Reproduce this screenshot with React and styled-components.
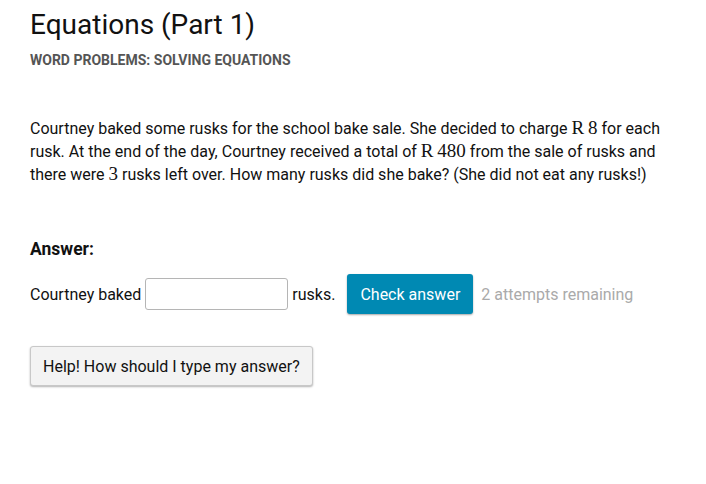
import React from "react";
import styled, { createGlobalStyle } from "styled-components";

const Global = createGlobalStyle`
  html, body { margin: 0; padding: 0; background: #fff; }
  body { font-family: Roboto, "Noto Sans", sans-serif; color: #111; }
`;

const Page = styled.div`
  padding: 8px 30px 40px 30px;
  width: 646px;
`;

const Title = styled.h1`
  font-size: 28px;
  font-weight: 400;
  margin: 0;
  line-height: 34px;
  color: #111;
`;

const Subtitle = styled.div`
  font-size: 14px;
  font-weight: 700;
  color: #555;
  text-transform: uppercase;
  margin-top: 9px;
  line-height: 18px;
`;

const Problem = styled.p`
  font-size: 16px;
  line-height: 23px;
  margin: 48px 0 0 0;
  max-width: 640px;
`;

const M = styled.span`
  font-family: "Liberation Serif", "DejaVu Serif", serif;
  font-size: 19px;
  line-height: 1;
`;

const AnswerLabel = styled.div`
  font-size: 17.5px;
  font-weight: 700;
  margin-top: 52px;
  line-height: 22px;
`;

const Row = styled.div`
  display: flex;
  align-items: center;
  margin-top: 14px;
  font-size: 16px;
`;

const Input = styled.input`
  width: 143px;
  height: 32px;
  box-sizing: border-box;
  border: 1px solid #b5b5b5;
  border-radius: 3px;
  margin: 0 4px;
  font-size: 16px;
  font-family: inherit;
`;

const CheckButton = styled.button`
  margin-left: 12px;
  height: 40px;
  padding: 0 13px;
  background: #0089b3;
  color: #fff;
  border: none;
  border-radius: 3px;
  font-family: inherit;
  font-size: 16px;
  box-shadow: 0 1px 2px rgba(0,0,0,0.35);
`;

const Attempts = styled.span`
  margin-left: 8px;
  color: #aaa;
`;

const HelpButton = styled.button`
  margin-top: 32px;
  height: 40px;
  padding: 0 12px;
  background: #f3f3f3;
  border: 1px solid #c8c8c8;
  border-radius: 3px;
  font-family: Roboto, sans-serif;
  font-size: 16px;
  color: #111;
  box-shadow: 0 1px 2px rgba(0,0,0,0.3);
`;

export default function App() {
  return (
    <>
      <Global />
      <Page>
        <Title>Equations (Part 1)</Title>
        <Subtitle>Word Problems: Solving Equations</Subtitle>
        <Problem>
          Courtney baked some rusks for the school bake sale. She decided to charge <M>R&thinsp;8</M> for each
          rusk. At the end of the day, Courtney received a total of <M>R&thinsp;480</M> from the sale of rusks and
          there were <M>3</M> rusks left over. How many rusks did she bake? (She did not eat any rusks!)
        </Problem>
        <AnswerLabel>Answer:</AnswerLabel>
        <Row>
          Courtney baked <Input /> rusks.
          <CheckButton>Check answer</CheckButton>
          <Attempts>2 attempts remaining</Attempts>
        </Row>
        <HelpButton>Help! How should I type my answer?</HelpButton>
      </Page>
    </>
  );
}
